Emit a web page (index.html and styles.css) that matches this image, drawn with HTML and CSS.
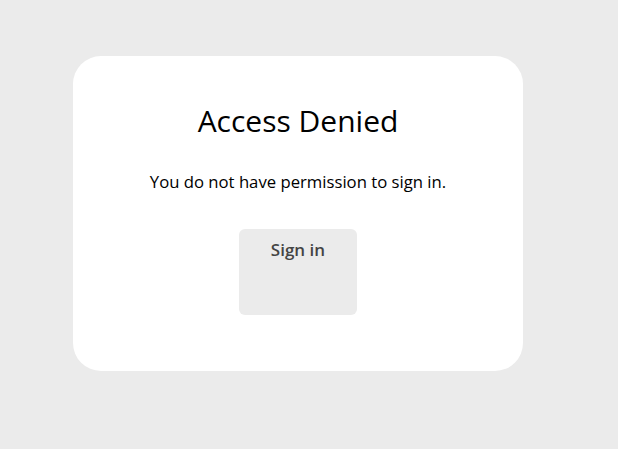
FILE: index.html
```html
<!DOCTYPE html>
<html>
<head>
<meta charset="utf-8">
<link rel="stylesheet" href="styles.css">
</head>
<body>
<main class="card">
  <h1 class="title">Access Denied</h1>
  <p class="message">You do not have permission to sign in.</p>
  <button class="signin">Sign in</button>
</main>
</body>
</html>
```
FILE: styles.css
```css
html, body {
  margin: 0;
  height: 100%;
}
body {
  background: #ebebeb;
  font-family: "Open Sans", "Noto Sans", sans-serif;
  padding: 56px 0 0 73px;
  box-sizing: border-box;
}
.card {
  width: 450px;
  height: 315px;
  box-sizing: border-box;
  background: #fff;
  border-radius: 28px;
  display: flex;
  flex-direction: column;
  align-items: center;
  padding-top: 44px;
}
.title {
  margin: 0;
  font-size: 30px;
  font-weight: 400;
  line-height: 42px;
  color: #000;
}
.message {
  margin: 28px 0 0;
  font-size: 16.7px;
  line-height: 24px;
  color: #000;
}
.signin {
  margin-top: 35px;
  width: 118px;
  height: 86px;
  border: none;
  border-radius: 6px;
  background: #ebebeb;
  color: #444;
  font-family: inherit;
  font-size: 17px;
  font-weight: 600;
  display: flex;
  justify-content: center;
  align-items: flex-start;
  padding-top: 9px;
}
```
